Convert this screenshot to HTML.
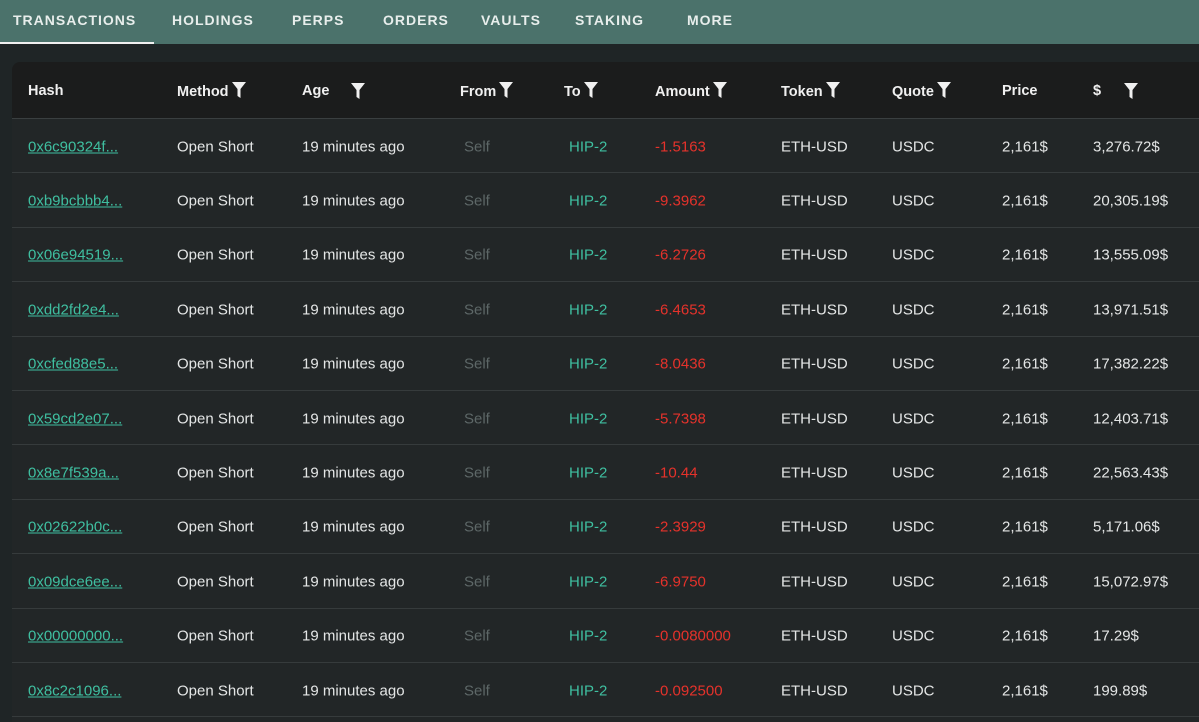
<!DOCTYPE html><html><head><style>
body{margin:0;width:1199px;height:714px;overflow:hidden;background:#1f2526;font-family:"Liberation Sans",sans-serif;}
.tabs{height:44px;background:#4b726b;position:relative;}
.tab{position:absolute;top:12px;color:#e8eeec;font-size:14px;font-weight:bold;letter-spacing:1px;}
.ul{position:absolute;left:0;top:42px;width:154px;height:2px;background:#f0f0f0;}
.tbl{position:absolute;left:12px;top:62px;width:1200px;height:660px;background:#222627;border-radius:8px 0 0 0;overflow:hidden;}
.hd{height:56px;background:#1b1c1c;border-bottom:1px solid #3a3f40;position:relative;}
.row{height:53.4px;border-bottom:1px solid #363b3c;position:relative;}
.c{position:absolute;top:50%;transform:translateY(-50%);font-size:15px;color:#e4e6e6;white-space:nowrap;margin-top:1px}
.hd .c{font-weight:bold;font-size:14.5px;color:#f0f0f0;}
.f{display:inline-block;vertical-align:-2px;margin-left:3px}
.row a.c{color:#3fbfa0;text-decoration:underline;}
.row .self{color:#5d6767}.row .hip{color:#3fbfa0}.row .neg{color:#e5322b}
.h{left:16px}.m{left:165px}.a{left:290px}.s{left:452px}.t{left:557px}.n{left:643px}.k{left:769px}.q{left:880px}.p{left:990px}.d{left:1081px}
</style></head><body>
<div class="tabs">
<span class="tab" style="left:13px">TRANSACTIONS</span>
<span class="tab" style="left:172px">HOLDINGS</span>
<span class="tab" style="left:292px">PERPS</span>
<span class="tab" style="left:383px">ORDERS</span>
<span class="tab" style="left:481px">VAULTS</span>
<span class="tab" style="left:575px">STAKING</span>
<span class="tab" style="left:687px">MORE</span>
<div class="ul"></div></div>
<div class="tbl">
<div class="hd">
<span class="c" style="left:16px">Hash</span>
<span class="c" style="left:165px">Method<svg class="f" width="14" height="16" viewBox="0 0 14 16"><path d="M0 0H14L8.5 7V16L5.5 14V7Z" fill="#f0f0f0"/></svg></span>
<span class="c" style="left:290px">Age</span><svg style="position:absolute;left:339px;top:21px" width="14" height="16" viewBox="0 0 14 16"><path d="M0 0H14L8.5 7V16L5.5 14V7Z" fill="#f0f0f0"/></svg>
<span class="c" style="left:448px">From<svg class="f" width="14" height="16" viewBox="0 0 14 16"><path d="M0 0H14L8.5 7V16L5.5 14V7Z" fill="#f0f0f0"/></svg></span>
<span class="c" style="left:552px">To<svg class="f" width="14" height="16" viewBox="0 0 14 16"><path d="M0 0H14L8.5 7V16L5.5 14V7Z" fill="#f0f0f0"/></svg></span>
<span class="c" style="left:643px">Amount<svg class="f" width="14" height="16" viewBox="0 0 14 16"><path d="M0 0H14L8.5 7V16L5.5 14V7Z" fill="#f0f0f0"/></svg></span>
<span class="c" style="left:769px">Token<svg class="f" width="14" height="16" viewBox="0 0 14 16"><path d="M0 0H14L8.5 7V16L5.5 14V7Z" fill="#f0f0f0"/></svg></span>
<span class="c" style="left:880px">Quote<svg class="f" width="14" height="16" viewBox="0 0 14 16"><path d="M0 0H14L8.5 7V16L5.5 14V7Z" fill="#f0f0f0"/></svg></span>
<span class="c" style="left:990px">Price</span>
<span class="c" style="left:1081px">$</span><svg style="position:absolute;left:1112px;top:21px" width="14" height="16" viewBox="0 0 14 16"><path d="M0 0H14L8.5 7V16L5.5 14V7Z" fill="#f0f0f0"/></svg>
</div>
<div class="row"><a class="c h">0x6c90324f...</a><span class="c m">Open Short</span><span class="c a">19 minutes ago</span><span class="c s self">Self</span><span class="c t hip">HIP-2</span><span class="c n neg">-1.5163</span><span class="c k">ETH-USD</span><span class="c q">USDC</span><span class="c p">2,161$</span><span class="c d">3,276.72$</span></div>
<div class="row"><a class="c h">0xb9bcbbb4...</a><span class="c m">Open Short</span><span class="c a">19 minutes ago</span><span class="c s self">Self</span><span class="c t hip">HIP-2</span><span class="c n neg">-9.3962</span><span class="c k">ETH-USD</span><span class="c q">USDC</span><span class="c p">2,161$</span><span class="c d">20,305.19$</span></div>
<div class="row"><a class="c h">0x06e94519...</a><span class="c m">Open Short</span><span class="c a">19 minutes ago</span><span class="c s self">Self</span><span class="c t hip">HIP-2</span><span class="c n neg">-6.2726</span><span class="c k">ETH-USD</span><span class="c q">USDC</span><span class="c p">2,161$</span><span class="c d">13,555.09$</span></div>
<div class="row"><a class="c h">0xdd2fd2e4...</a><span class="c m">Open Short</span><span class="c a">19 minutes ago</span><span class="c s self">Self</span><span class="c t hip">HIP-2</span><span class="c n neg">-6.4653</span><span class="c k">ETH-USD</span><span class="c q">USDC</span><span class="c p">2,161$</span><span class="c d">13,971.51$</span></div>
<div class="row"><a class="c h">0xcfed88e5...</a><span class="c m">Open Short</span><span class="c a">19 minutes ago</span><span class="c s self">Self</span><span class="c t hip">HIP-2</span><span class="c n neg">-8.0436</span><span class="c k">ETH-USD</span><span class="c q">USDC</span><span class="c p">2,161$</span><span class="c d">17,382.22$</span></div>
<div class="row"><a class="c h">0x59cd2e07...</a><span class="c m">Open Short</span><span class="c a">19 minutes ago</span><span class="c s self">Self</span><span class="c t hip">HIP-2</span><span class="c n neg">-5.7398</span><span class="c k">ETH-USD</span><span class="c q">USDC</span><span class="c p">2,161$</span><span class="c d">12,403.71$</span></div>
<div class="row"><a class="c h">0x8e7f539a...</a><span class="c m">Open Short</span><span class="c a">19 minutes ago</span><span class="c s self">Self</span><span class="c t hip">HIP-2</span><span class="c n neg">-10.44</span><span class="c k">ETH-USD</span><span class="c q">USDC</span><span class="c p">2,161$</span><span class="c d">22,563.43$</span></div>
<div class="row"><a class="c h">0x02622b0c...</a><span class="c m">Open Short</span><span class="c a">19 minutes ago</span><span class="c s self">Self</span><span class="c t hip">HIP-2</span><span class="c n neg">-2.3929</span><span class="c k">ETH-USD</span><span class="c q">USDC</span><span class="c p">2,161$</span><span class="c d">5,171.06$</span></div>
<div class="row"><a class="c h">0x09dce6ee...</a><span class="c m">Open Short</span><span class="c a">19 minutes ago</span><span class="c s self">Self</span><span class="c t hip">HIP-2</span><span class="c n neg">-6.9750</span><span class="c k">ETH-USD</span><span class="c q">USDC</span><span class="c p">2,161$</span><span class="c d">15,072.97$</span></div>
<div class="row"><a class="c h">0x00000000...</a><span class="c m">Open Short</span><span class="c a">19 minutes ago</span><span class="c s self">Self</span><span class="c t hip">HIP-2</span><span class="c n neg">-0.0080000</span><span class="c k">ETH-USD</span><span class="c q">USDC</span><span class="c p">2,161$</span><span class="c d">17.29$</span></div>
<div class="row"><a class="c h">0x8c2c1096...</a><span class="c m">Open Short</span><span class="c a">19 minutes ago</span><span class="c s self">Self</span><span class="c t hip">HIP-2</span><span class="c n neg">-0.092500</span><span class="c k">ETH-USD</span><span class="c q">USDC</span><span class="c p">2,161$</span><span class="c d">199.89$</span></div>
</div>
</body></html>
